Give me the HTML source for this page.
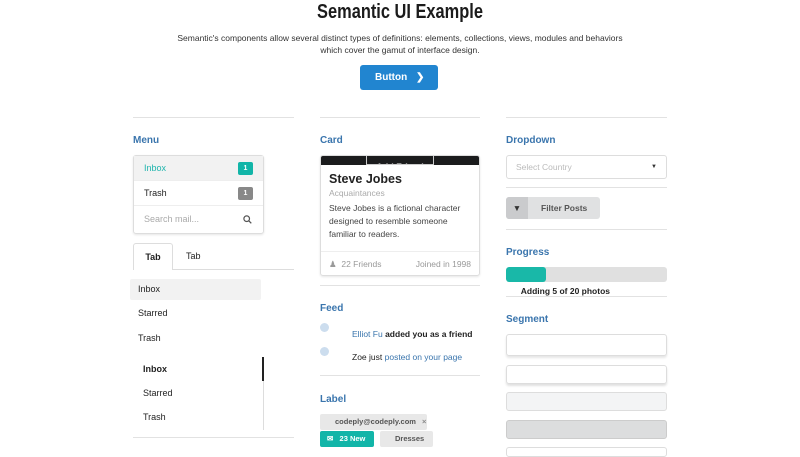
<!DOCTYPE html>
<html><head><meta charset="utf-8"><style>
*{box-sizing:border-box;margin:0;padding:0}
body{width:800px;height:450px;overflow:hidden;background:#fff;font-family:"Liberation Sans",sans-serif;color:#222;position:relative;font-size:9px}
.a{position:absolute}
.hr{position:absolute;height:1px;background:#e2e2e2}
.h{position:absolute;color:#3a75ad;font-weight:bold;font-size:10px}
.c{white-space:nowrap}
</style></head><body>
<div class="a c" style="left:0;width:800px;top:1px;text-align:center;font-size:20px;font-weight:bold;color:#1b1b1b;transform:scaleX(0.82)">Semantic UI Example</div>
<div class="a" style="left:160px;width:480px;top:32px;text-align:center;font-size:8.5px;line-height:12px;color:#333">Semantic's components allow several distinct types of definitions: elements, collections, views, modules and behaviors<br>which cover the gamut of interface design.</div>
<div class="a" style="left:360px;top:65px;width:78px;height:25px;background:#2185d0;border-radius:3px;color:#fff;font-weight:bold;font-size:10px;line-height:25px;padding-left:15px">Button <span style="margin-left:6px">&#x276F;</span></div>

<!-- left -->
<div class="hr" style="left:133px;width:161px;top:117px"></div>
<div class="h" style="left:133px;top:135px">Menu</div>
<div class="a" style="left:133px;top:155px;width:131px;height:79px;border:1px solid #ddd;border-radius:3px;box-shadow:0 1px 2px rgba(0,0,0,.1)">
 <div style="height:25px;background:#f2f2f2;border-bottom:1px solid #eee;color:#1fb5ad;padding:7px 10px;position:relative">Inbox<span class="a" style="right:10px;top:6px;width:15px;height:13px;background:#12b5a8;color:#fff;font-size:7px;text-align:center;line-height:13px;border-radius:2px;font-weight:bold">1</span></div>
 <div style="height:25px;border-bottom:1px solid #eee;padding:7px 10px;position:relative">Trash<span class="a" style="right:10px;top:6px;width:15px;height:13px;background:#888;color:#fff;font-size:7px;text-align:center;line-height:13px;border-radius:2px;font-weight:bold">1</span></div>
 <div style="padding:8px 10px;color:#aaa;position:relative">Search mail...<svg class="a" style="right:11px;top:9px" width="9" height="9" viewBox="0 0 9 9"><circle cx="3.7" cy="3.7" r="2.8" fill="none" stroke="#555" stroke-width="1.2"/><path d="M5.8 5.8L8.3 8.3" stroke="#555" stroke-width="1.3"/></svg></div>
</div>
<div class="a" style="left:133px;top:243px;width:40px;height:27px;border:1px solid #ddd;border-bottom:none;border-radius:3px 3px 0 0;background:#fff;text-align:center;line-height:26px;font-weight:bold;z-index:2">Tab</div>
<div class="a" style="left:186px;top:251px">Tab</div>
<div class="hr" style="left:133px;width:161px;top:269px;background:#ddd"></div>
<div class="a" style="left:130px;top:279px;width:131px;height:21px;background:#f2f2f2;border-radius:2px;padding:5px 8px">Inbox</div>
<div class="a" style="left:138px;top:308px">Starred</div>
<div class="a" style="left:138px;top:333px">Trash</div>
<div class="a" style="left:143px;top:364px;font-weight:bold">Inbox</div>
<div class="a" style="left:143px;top:388px">Starred</div>
<div class="a" style="left:143px;top:412px">Trash</div>
<div class="a" style="left:263px;top:357px;width:1px;height:73px;background:#ddd"></div>
<div class="a" style="left:262px;top:357px;width:2px;height:24px;background:#222"></div>
<div class="hr" style="left:133px;width:161px;top:437px"></div>

<!-- middle -->
<div class="hr" style="left:320px;width:160px;top:117px"></div>
<div class="h" style="left:320px;top:135px">Card</div>
<div class="a" style="left:320px;top:155px;width:160px;height:121px;border:1px solid #ddd;border-radius:3px;box-shadow:0 1px 2px rgba(0,0,0,.1);overflow:hidden">
 <div style="height:9px;background:#1b1c1d;position:relative"><div class="a" style="left:45px;top:0;width:68px;height:9px;border:1px solid #ccc;border-top:none;background:#1b1c1d;color:#fff;font-size:9px;text-align:center;line-height:22px;overflow:hidden;font-weight:bold">Add Friend</div></div>
 <div style="padding:7px 8px 0"><div style="font-weight:bold;font-size:12.5px">Steve Jobes</div>
 <div style="color:#aaa;font-size:8.5px;margin-top:2px">Acquaintances</div>
 <div style="color:#444;font-size:8.5px;line-height:13px;margin-top:4px">Steve Jobes is a fictional character designed to resemble someone familiar to readers.</div></div>
 <div class="a" style="left:0;right:0;top:95px;border-top:1px solid #eee;padding:7px 8px;color:#999;font-size:8.5px">&#9823;&nbsp; 22 Friends<span style="float:right">Joined in 1998</span></div>
</div>
<div class="hr" style="left:320px;width:160px;top:285px"></div>
<div class="h" style="left:320px;top:303px">Feed</div>
<div class="a" style="left:320px;top:323px;width:9px;height:9px;background:#cde;border-radius:50%"></div>
<div class="a c" style="left:352px;top:329px;font-weight:bold;font-size:8.5px"><span style="color:#3a75ad;font-weight:normal">Elliot Fu</span> added you as a friend</div>
<div class="a" style="left:320px;top:347px;width:9px;height:9px;background:#cde;border-radius:50%"></div>
<div class="a c" style="left:352px;top:352px;font-size:8.5px">Zoe just <span style="color:#3a75ad">posted on your page</span></div>
<div class="hr" style="left:320px;width:160px;top:375px"></div>
<div class="h" style="left:320px;top:394px">Label</div>
<div class="a c" style="left:320px;top:414px;width:107px;height:16px;background:#e8e8e8;border-radius:2px;font-size:7.5px;font-weight:bold;color:#555;line-height:16px;padding-left:15px">codeply@codeply.com <span style="margin-left:4px;color:#888">×</span></div>
<div class="a c" style="left:320px;top:431px;width:54px;height:16px;background:#12b5a8;border-radius:2px;color:#fff;font-size:7.5px;font-weight:bold;line-height:16px;padding-left:7px">&#9993;&nbsp;&nbsp; 23 New</div>
<div class="a c" style="left:380px;top:431px;width:53px;height:16px;background:#e8e8e8;border-radius:2px;color:#555;font-size:7.5px;font-weight:bold;line-height:16px;padding-left:15px">Dresses</div>

<!-- right -->
<div class="hr" style="left:506px;width:161px;top:117px"></div>
<div class="h" style="left:506px;top:135px">Dropdown</div>
<div class="a" style="left:506px;top:155px;width:161px;height:24px;border:1px solid #ddd;border-radius:3px;color:#bbb;padding:6px 9px;font-size:8.5px">Select Country<span style="float:right;color:#333;font-size:6px;margin-top:2px">&#9660;</span></div>
<div class="hr" style="left:506px;width:161px;top:187px"></div>
<div class="a" style="left:506px;top:197px;width:94px;height:22px;background:#e0e1e2;border-radius:3px;overflow:hidden;font-weight:bold;font-size:8.5px;color:#555;line-height:22px"><span style="display:inline-block;width:22px;background:#cacbcd;text-align:center;color:#333">&#9660;</span><span style="margin-left:13px">Filter Posts</span></div>
<div class="hr" style="left:506px;width:161px;top:229px"></div>
<div class="h" style="left:506px;top:247px">Progress</div>
<div class="a" style="left:506px;top:267px;width:161px;height:15px;background:#e0e0e0;border-radius:3px;overflow:hidden"><div style="width:40px;height:15px;background:#19b8a8;border-radius:3px"></div></div>
<div class="a c" style="left:506px;width:104px;top:286px;text-align:right;font-weight:bold;font-size:8.5px">Adding 5 of 20 photos</div>
<div class="hr" style="left:506px;width:161px;top:296px"></div>
<div class="h" style="left:506px;top:314px">Segment</div>
<div class="a" style="left:506px;top:334px;width:161px;height:22px;border:1px solid #ddd;border-radius:3px;box-shadow:0 2px 2px rgba(0,0,0,.1)"></div>
<div class="a" style="left:506px;top:365px;width:161px;height:19px;border:1px solid #ddd;border-radius:3px;box-shadow:0 2px 2px rgba(0,0,0,.12)"></div>
<div class="a" style="left:506px;top:392px;width:161px;height:19px;border:1px solid #ddd;border-radius:3px;background:#f3f4f5"></div>
<div class="a" style="left:506px;top:420px;width:161px;height:19px;border:1px solid #ccc;border-radius:3px;background:#dcddde"></div>
<div class="a" style="left:506px;top:447px;width:161px;height:10px;border:1px solid #ddd;border-radius:3px"></div>
</body></html>
